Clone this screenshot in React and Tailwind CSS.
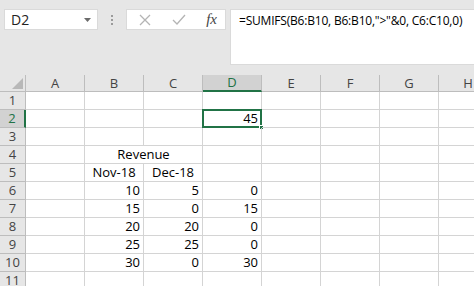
import React from 'react';

const cols = ['A', 'B', 'C', 'D', 'E', 'F', 'G', 'H'];

// cell contents keyed by row number
const data = {
  2: { D: '45' },
  4: { B: 'Revenue' },
  5: { B: 'Nov-18', C: 'Dec-18' },
  6: { B: '10', C: '5', D: '0' },
  7: { B: '15', C: '0', D: '15' },
  8: { B: '20', C: '20', D: '0' },
  9: { B: '25', C: '25', D: '0' },
  10: { B: '30', C: '0', D: '30' },
};

const rows = [1, 2, 3, 4, 5, 6, 7, 8, 9, 10, 11];

const Cell = ({ row, col }) => {
  const value = data[row] && data[row][col];
  const selected = row === 2 && col === 'D';
  const isLabel = value && isNaN(Number(value));

  if (row === 4 && col === 'B') {
    return (
      <div className="col-span-2 h-[18px] border-b border-r border-[#d4d4d4] flex items-center justify-center text-[13px] leading-none text-black">
        Revenue
      </div>
    );
  }
  if (row === 4 && col === 'C') return null;

  return (
    <div
      className={`relative h-[18px] border-b border-r border-[#d4d4d4] flex items-center px-[3px] text-[13px] leading-none text-black ${
        isLabel ? 'justify-center' : 'justify-end'
      }`}
    >
      {value}
      {selected && (
        <>
          <div className="absolute left-[-1px] top-[-1px] right-[-1px] bottom-[-1px] border-2 border-[#217346]" />
          <div className="absolute right-[-3px] bottom-[-3px] w-[5px] h-[5px] bg-[#217346] border border-white" />
        </>
      )}
    </div>
  );
};

const App = () => {
  return (
    <div
      className="w-[474px] h-[286px] overflow-hidden bg-white"
      style={{ fontFamily: '"Open Sans", "Noto Sans", sans-serif' }}
    >
      {/* Top bar - name box and formula bar */}
      <div className="h-[75px] bg-[#e6e6e6] flex items-start pt-[9px] pl-[4px]">
        <div className="shrink-0 w-[94px] h-[21px] bg-white border border-[#dadada] flex items-center justify-between pl-[6px] pr-[6px]">
          <span className="text-[14px] text-[#222] leading-none">D2</span>
          <svg width="7" height="4" viewBox="0 0 7 4">
            <path d="M0 0 L7 0 L3.5 4 Z" fill="#6b6b6b" />
          </svg>
        </div>
        <div className="shrink-0 w-[28px] h-[21px] flex flex-col items-center justify-center gap-[2px]">
          <div className="w-[2px] h-[2px] bg-[#9a9a9a]" />
          <div className="w-[2px] h-[2px] bg-[#9a9a9a]" />
          <div className="w-[2px] h-[2px] bg-[#9a9a9a]" />
        </div>
        <div className="shrink-0 w-[100px] h-[21px] bg-white border border-[#dadada] flex items-center justify-between pl-[12px] pr-[8px]">
          <svg width="12" height="12" viewBox="0 0 12 12">
            <path d="M1 1 L11 11 M11 1 L1 11" stroke="#b4b4b4" strokeWidth="1.3" />
          </svg>
          <svg width="14" height="12" viewBox="0 0 14 12">
            <path d="M1 6 L5 10 L13 1" stroke="#b4b4b4" strokeWidth="1.3" fill="none" />
          </svg>
          <span
            className="text-[15px] italic text-[#444] leading-none"
            style={{ fontFamily: '"Liberation Serif", serif' }}
          >
            fx
          </span>
        </div>
        <div className="ml-[4px] min-w-0 flex-1 h-[56px] bg-white border-y border-l border-[#dadada] pl-[8px] pt-[3px] overflow-hidden text-[12px] leading-[16px] text-black whitespace-nowrap tracking-[-0.2px]">
          =SUMIFS(B6:B10, B6:B10,"&gt;"&amp;0, C6:C10,0)
        </div>
      </div>

      {/* Grid */}
      <div className="grid grid-cols-[26px_repeat(8,59px)]">
        {/* column headers */}
        <div className="relative h-[17px] bg-[#e6e6e6] border-r border-b border-[#bdbdbd]">
          <svg className="absolute right-[2px] bottom-[2px]" width="11" height="11" viewBox="0 0 11 11">
            <path d="M11 0 L11 11 L0 11 Z" fill="#b8b8b8" />
          </svg>
        </div>
        {cols.map((c) => (
          <div
            key={c}
            className={`h-[17px] flex items-center justify-center text-[13px] leading-none border-r ${
              c === 'D'
                ? 'bg-[#d2d2d2] border-b-2 border-b-[#217346] border-r-[#bdbdbd] text-[#217346]'
                : 'bg-[#e6e6e6] border-b border-[#bdbdbd] text-[#444]'
            }`}
          >
            {c}
          </div>
        ))}

        {rows.map((r) => (
          <React.Fragment key={r}>
            <div
              className={`h-[18px] flex items-center justify-center text-[13px] leading-none border-b border-[#bdbdbd] ${
                r === 2
                  ? 'bg-[#d2d2d2] border-r-2 border-r-[#217346] text-[#217346]'
                  : 'bg-[#e6e6e6] border-r border-r-[#bdbdbd] text-[#444]'
              }`}
            >
              {r}
            </div>
            {cols.map((c) => (
              <Cell key={c} row={r} col={c} />
            ))}
          </React.Fragment>
        ))}
      </div>
    </div>
  );
};

export default App;
